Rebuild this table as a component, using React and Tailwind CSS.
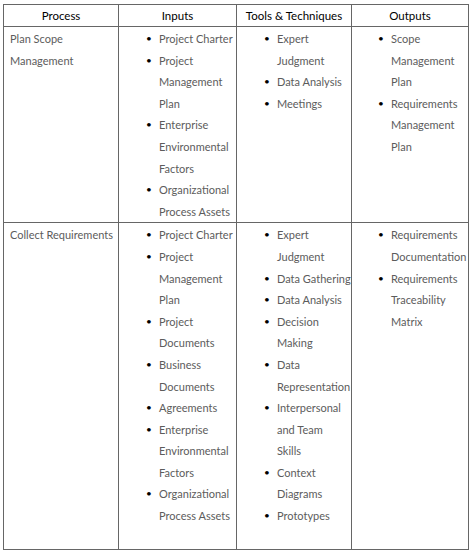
const rows = [
  {
    process: ["Plan Scope", "Management"],
    inputs: [
      ["Project Charter"],
      ["Project", "Management", "Plan"],
      ["Enterprise", "Environmental", "Factors"],
      ["Organizational", "Process Assets"],
    ],
    tools: [["Expert", "Judgment"], ["Data Analysis"], ["Meetings"]],
    outputs: [
      ["Scope", "Management", "Plan"],
      ["Requirements", "Management", "Plan"],
    ],
    pad: "pb-0",
  },
  {
    process: ["Collect Requirements"],
    inputs: [
      ["Project Charter"],
      ["Project", "Management", "Plan"],
      ["Project", "Documents"],
      ["Business", "Documents"],
      ["Agreements"],
      ["Enterprise", "Environmental", "Factors"],
      ["Organizational", "Process Assets"],
    ],
    tools: [
      ["Expert", "Judgment"],
      ["Data Gathering"],
      ["Data Analysis"],
      ["Decision", "Making"],
      ["Data", "Representation"],
      ["Interpersonal", "and Team", "Skills"],
      ["Context", "Diagrams"],
      ["Prototypes"],
    ],
    outputs: [
      ["Requirements", "Documentation"],
      ["Requirements", "Traceability", "Matrix"],
    ],
    pad: "pb-[22px]",
  },
];

const Bullets = ({ items, left }) => (
  <ul className={`pt-px ${left}`}>
    {items.map((lines) => (
      <li key={lines.join(" ")} className="flex">
        <span className="w-[13px] shrink-0 text-black text-[10px]">•</span>
        <span className="whitespace-nowrap">
          {lines.map((l) => (
            <div key={l}>{l}</div>
          ))}
        </span>
      </li>
    ))}
  </ul>
);

const App = () => {
  return (
    <div className="w-[474px] h-[559px] bg-white pt-[4px] pl-[3px] font-['Lato',sans-serif]">
      <div className="w-[466px] grid grid-cols-[115px_118px_115px_117px] border-l border-t border-[#666] text-[11px] leading-[21.6px] text-[#5c5c5c]">
        {["Process", "Inputs", "Tools & Techniques", "Outputs"].map((h) => (
          <div
            key={h}
            className="h-[22px] flex items-center justify-center border-r border-b border-[#666] text-black text-[11.5px]"
          >
            {h}
          </div>
        ))}
        {rows.map((r, i) => (
          <div key={i} className="contents">
            <div className={`border-r border-b border-[#666] pl-[6px] pt-px ${r.pad}`}>
              {r.process.map((p) => (
                <div key={p}>{p}</div>
              ))}
            </div>
            <div className={`border-r border-b border-[#666] ${r.pad}`}>
              <Bullets items={r.inputs} left="pl-[27px]" />
            </div>
            <div className={`border-r border-b border-[#666] ${r.pad}`}>
              <Bullets items={r.tools} left="pl-[27px]" />
            </div>
            <div className={`border-r border-b border-[#666] ${r.pad}`}>
              <Bullets items={r.outputs} left="pl-[26px]" />
            </div>
          </div>
        ))}
      </div>
    </div>
  );
};

export default App;
